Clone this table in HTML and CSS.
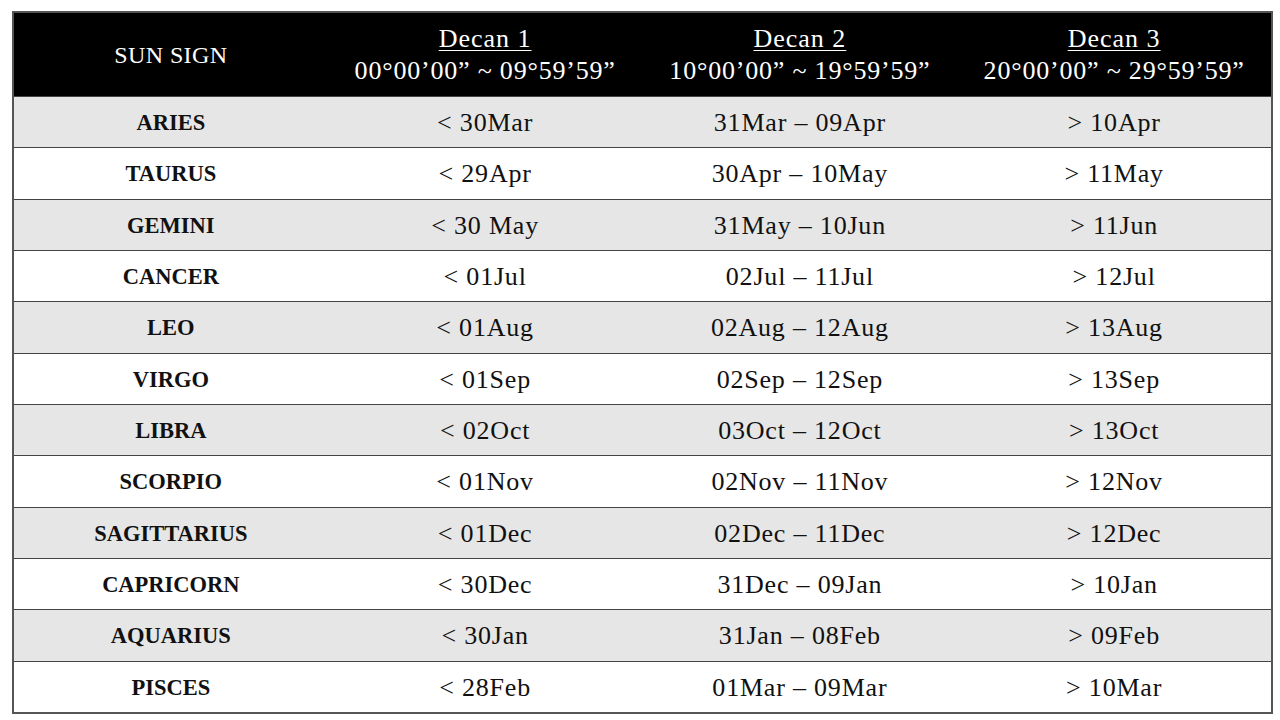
FILE: index.html
```html
<!DOCTYPE html>
<html>
<head>
<meta charset="utf-8">
<link rel="stylesheet" href="styles.css">
</head>
<body>
<table class="decans">
  <colgroup><col class="c"><col class="c"><col class="c"><col class="c"></colgroup>
  <thead>
    <tr class="head">
      <th class="sunsign">SUN SIGN</th>
      <th><span class="dec">Decan 1</span><br>00°00’00” ~ 09°59’59”</th>
      <th><span class="dec">Decan 2</span><br>10°00’00” ~ 19°59’59”</th>
      <th><span class="dec">Decan 3</span><br>20°00’00” ~ 29°59’59”</th>
    </tr>
  </thead>
  <tbody>
    <tr class="alt"><td class="sign">ARIES</td><td>&lt; 30Mar</td><td>31Mar – 09Apr</td><td>&gt; 10Apr</td></tr>
    <tr><td class="sign">TAURUS</td><td>&lt; 29Apr</td><td>30Apr – 10May</td><td>&gt; 11May</td></tr>
    <tr class="alt"><td class="sign">GEMINI</td><td>&lt; 30 May</td><td>31May – 10Jun</td><td>&gt; 11Jun</td></tr>
    <tr><td class="sign">CANCER</td><td>&lt; 01Jul</td><td>02Jul – 11Jul</td><td>&gt; 12Jul</td></tr>
    <tr class="alt"><td class="sign">LEO</td><td>&lt; 01Aug</td><td>02Aug – 12Aug</td><td>&gt; 13Aug</td></tr>
    <tr><td class="sign">VIRGO</td><td>&lt; 01Sep</td><td>02Sep – 12Sep</td><td>&gt; 13Sep</td></tr>
    <tr class="alt"><td class="sign">LIBRA</td><td>&lt; 02Oct</td><td>03Oct – 12Oct</td><td>&gt; 13Oct</td></tr>
    <tr><td class="sign">SCORPIO</td><td>&lt; 01Nov</td><td>02Nov – 11Nov</td><td>&gt; 12Nov</td></tr>
    <tr class="alt"><td class="sign">SAGITTARIUS</td><td>&lt; 01Dec</td><td>02Dec – 11Dec</td><td>&gt; 12Dec</td></tr>
    <tr><td class="sign">CAPRICORN</td><td>&lt; 30Dec</td><td>31Dec – 09Jan</td><td>&gt; 10Jan</td></tr>
    <tr class="alt"><td class="sign">AQUARIUS</td><td>&lt; 30Jan</td><td>31Jan – 08Feb</td><td>&gt; 09Feb</td></tr>
    <tr><td class="sign">PISCES</td><td>&lt; 28Feb</td><td>01Mar – 09Mar</td><td>&gt; 10Mar</td></tr>
  </tbody>
</table>
</body>
</html>
```
FILE: styles.css
```css
html, body {
  margin: 0;
  padding: 0;
  background: #ffffff;
}
body {
  padding: 11px 0 0 12px;
  font-family: "Liberation Serif", "Times New Roman", serif;
  color: #111;
}
.decans {
  border-collapse: collapse;
  table-layout: fixed;
  width: 1261px;
  border: 2px solid #555;
}
.decans .c {
  width: 25%;
}
.head th {
  background: #000;
  color: #fff;
  font-weight: normal;
  font-size: 26px;
  letter-spacing: 0.8px;
  line-height: 32px;
  height: 83px;
  padding: 0;
  text-align: center;
  vertical-align: middle;
}
.head th.sunsign {
  font-size: 24px;
  letter-spacing: 0.4px;
}
.dec {
  text-decoration: underline;
  text-underline-offset: 3px;
  text-decoration-thickness: 1px;
  letter-spacing: 1px;
}
.decans td {
  height: 48.33px;
  padding: 2px 0 0 0;
  text-align: center;
  vertical-align: middle;
  font-size: 26px;
  letter-spacing: 0.8px;
  border-top: 1.4px solid #444;
  background: #fff;
}
.decans tr.alt td {
  background: #e6e6e6;
}
.decans td.sign {
  font-weight: bold;
  font-size: 22.5px;
  letter-spacing: 0;
}
```
